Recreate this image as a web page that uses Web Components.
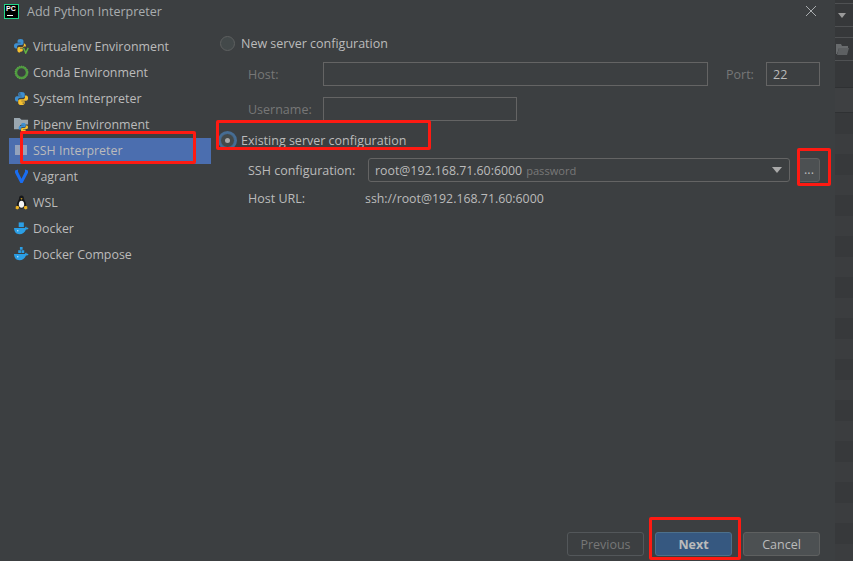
<!DOCTYPE html>
<html>
<head>
<meta charset="utf-8">
<title>Add Python Interpreter</title>
<style>
  html, body { margin: 0; height: 100%; background: #3c3f41; overflow: hidden; }
  body { font: 13px "Open Sans", sans-serif; color: #bbb; }
</style>
</head>
<body>
<template id="icons">
  <svg data-icon="python" viewBox="0 0 16 16"><path fill="#3d8fd1" d="M8 1C5.500 1 4.600 2 4.600 3.300V5h3.600v.6H3C1.700 5.600 1 6.700 1 8.300c0 1.700.8 2.800 2 2.800h1.300V9.400c0-1.200 1-2.200 2.300-2.200h3.100c1 0 1.800-.8 1.800-1.800V3.300C11.500 2 10.400 1 8 1z"/><path fill="#f5c02f" d="M8 15c2.500 0 3.400-1 3.400-2.300V11H7.800v-.6H13c1.300 0 2-1.100 2-2.700 0-1.700-.8-2.800-2-2.800h-1.300v1.700c0 1.200-1 2.200-2.300 2.200H6.300c-1 0-1.800.8-1.800 1.800v2.100C4.500 14 5.600 15 8 15z"/><circle cx="6.200" cy="3.100" r=".7" fill="#3c3f41"/><circle cx="9.800" cy="12.900" r=".7" fill="#3c3f41"/></svg>
  <svg data-icon="venv" viewBox="0 0 16 16"><path fill="#3d8fd1" d="M7 0C4.700 0 3.800 1 3.800 2.200V4h3.400v.6H2.200C1 4.600 0 5.600 0 7.300c0 1.700.8 2.800 2 2.800h1.200V8.500c0-1.200 1-2.200 2.200-2.200h3c1 0 1.700-.8 1.700-1.700V2.200C10.100 1 9.200 0 7 0z"/><path fill="#f5c02f" d="M6.500 13.500c1.300 0 2.300-.3 2.800-1V10h-3V9.400h2.900l1.500-1.500h2.100c-.2-2-1-3-2-3H10.500v1.500c0 1.200-1 2.200-2.200 2.200H5.300c-1 0-1.700.8-1.700 1.700v1.900c0 1.300 1 2.300 2.900 2.300z"/><path fill="none" stroke="#62b543" stroke-width="1.500" d="M10.200 9.500l2.300 5.500 2.700-5.500"/></svg>
  <svg data-icon="conda" viewBox="0 0 16 16"><circle cx="8" cy="8" r="5.800" fill="none" stroke="#4f9c3f" stroke-width="2.500"/><circle cx="8" cy="8" r="6.900" fill="none" stroke="#6fbf55" stroke-width=".7" stroke-dasharray="1.200 1.200"/></svg>
  <svg data-icon="pipenv" viewBox="0 0 16 16"><path fill="#9aa7b0" d="M0 1h6l2 2h7v5H9c-2 0-3 1-3 3v2H0z"/><path fill="#3d8fd1" d="M10 6.500c-1.700 0-2.400.7-2.400 1.600v1.200h2.600v.4H6.600C5.700 9.700 5 10.400 5 11.600s.6 1.900 1.500 1.900h.9v-1.200c0-.8.7-1.500 1.600-1.500h2.200c.7 0 1.300-.6 1.300-1.300V8.100c0-.9-.8-1.600-2.500-1.600z"/><path fill="#f5c02f" d="M10 16c1.700 0 2.400-.7 2.400-1.600v-1.200H9.800v-.4h3.600c.9 0 1.600-.7 1.600-1.900s-.6-1.900-1.500-1.900h-.9v1.200c0 .8-.7 1.500-1.600 1.500H8.800c-.7 0-1.300.6-1.300 1.300v1.400c0 .9.800 1.600 2.500 1.600z"/></svg>
  <svg data-icon="ssh" viewBox="0 0 15 15"><path fill="#93a3bc" d="M1 2h5v10H1zM7 2h6v10H7z"/></svg>
  <svg data-icon="vagrant" viewBox="0 0 15 15"><path fill="#1a6df0" d="M1 1.500l3-.9v2.200l3.500 6.900 3.500-6.900V.6l3 .9v2.300L8.600 14H6.400L1 3.800z"/></svg>
  <svg data-icon="wsl" viewBox="0 0 16 16"><path fill="#17181a" d="M8 .5C6.300.5 5.400 1.800 5.400 3.500c0 2-2.400 4.200-2.400 7.200 0 2 1.800 3.800 5 3.800s5-1.800 5-3.800c0-3-2.400-5.200-2.400-7.200C10.600 1.800 9.700.5 8 .5z"/><ellipse cx="8" cy="9.800" rx="2.800" ry="3.800" fill="#f4f4f4"/><path fill="#eeb422" d="M6.900 3.500h2.200L8 5zM2 12l2.700-.6.9 2.800-2.200 1.300-1.700-1.100zM14 12l-2.700-.6-.9 2.800 2.200 1.300 1.700-1.100z"/></svg>
  <svg data-icon="docker" viewBox="0 0 16 16"><path fill="#2b9fe6" d="M5 1.500h5.500v5H5z"/><path fill="#2b9fe6" d="M0 7.500h11.500c.5-1 .9-1.400 1.400-1.700.4.500.6 1 .5 1.500.8-.1 1.600 0 2.100.4-.5 1-1.500 1.400-2.700 1.300C11.600 12.200 9 14 5.800 14 2 14 .2 11.500 0 7.500z"/><circle cx="4" cy="10.500" r=".8" fill="#bfe3f8"/></svg>
  <svg data-icon="compose" viewBox="0 0 16 16"><path fill="#2b9fe6" d="M6.300 0h2.900v2.800H6.300zM4.500 3.500h2.900v3H4.500zM8 3.500h2.900v3H8z"/><path fill="#2b9fe6" d="M0 7.500h11.500c.5-1 .9-1.400 1.400-1.700.4.500.6 1 .5 1.500.8-.1 1.600 0 2.100.4-.5 1-1.500 1.400-2.700 1.300C11.600 12.200 9 14 5.800 14 2 14 .2 11.500 0 7.500z"/><circle cx="4" cy="10.500" r=".8" fill="#bfe3f8"/></svg>
</template>

<ide-dialog>
  <env-item slot="side" icon="venv">Virtualenv Environment</env-item>
  <env-item slot="side" icon="conda">Conda Environment</env-item>
  <env-item slot="side" icon="python">System Interpreter</env-item>
  <env-item slot="side" icon="pipenv">Pipenv Environment</env-item>
  <env-item slot="side" icon="ssh" selected>SSH Interpreter</env-item>
  <env-item slot="side" icon="vagrant">Vagrant</env-item>
  <env-item slot="side" icon="wsl">WSL</env-item>
  <env-item slot="side" icon="docker">Docker</env-item>
  <env-item slot="side" icon="compose">Docker Compose</env-item>
  <ssh-form slot="main"></ssh-form>
</ide-dialog>
<red-mark style="left:20px;top:131px;width:176px;height:33px"></red-mark>
<red-mark style="left:216px;top:120px;width:215px;height:30px"></red-mark>
<red-mark style="left:797px;top:148px;width:34px;height:38px"></red-mark>
<red-mark style="left:649px;top:517px;width:92px;height:43px"></red-mark>

<script>
class IdeDialog extends HTMLElement {
  connectedCallback() {
    this.attachShadow({ mode: 'open' });
    this.shadowRoot.innerHTML = `
      <style>
        :host { display: flex; width: 853px; height: 561px; }
        .window { width: 835px; display: flex; flex-direction: column; background: #3c3f41; }
        .title { height: 22px; padding: 0 16px 0 4px; display: flex; align-items: center; gap: 8px; flex: none; font-size: 12.500px; color: #a9adaf; }
        .logo { width: 15px; height: 15px; background: #000; border: 1px solid #21d789; box-sizing: border-box; color: #fff; font: bold 7px/8px "Liberation Sans", sans-serif; padding-left: 1px; position: relative; }
        .logo::after { content: ""; position: absolute; left: 2px; bottom: 2px; width: 6px; height: 1px; background: #fff; }
        .title span { flex: 1; }
        .title svg { width: 12px; height: 12px; margin-right: 2px; }
        .body { flex: 1; display: flex; min-height: 0; padding-top: 11px; }
        .side { width: 202px; margin-left: 9px; padding-top: 1px; flex: none; display: flex; flex-direction: column; }
        .main { flex: 1; min-width: 0; }
      </style>
      <div class="window">
        <div class="title">
          <div class="logo">PC</div>
          <span>Add Python Interpreter</span>
          <svg viewBox="0 0 12 12"><path d="M1 1l10 10M11 1L1 11" stroke="#a9adaf" stroke-width="1" fill="none"/></svg>
        </div>
        <div class="body">
          <div class="side"><slot name="side"></slot></div>
          <div class="main"><slot name="main"></slot></div>
        </div>
      </div>
      <backdrop-strip></backdrop-strip>
    `;
  }
}

class EnvItem extends HTMLElement {
  connectedCallback() {
    this.attachShadow({ mode: 'open' });
    const svg = document.getElementById('icons').content.querySelector(`[data-icon="${this.getAttribute('icon')}"]`);
    this.shadowRoot.innerHTML = `
      <style>
        :host { display: flex; align-items: center; box-sizing: border-box; height: 26px; padding: 0 0 2px 5px; gap: 4px; font-size: 12.400px; color: #bbb; }
        :host([selected]) { background: #4b6eaf; color: #bbb; }
        svg { width: 15px; height: 15px; flex: none; }
      </style>
      <slot></slot>
    `;
    this.shadowRoot.insertBefore(svg.cloneNode(true), this.shadowRoot.querySelector('slot'));
  }
}

class RadioLine extends HTMLElement {
  connectedCallback() {
    this.attachShadow({ mode: 'open' });
    this.shadowRoot.innerHTML = `
      <style>
        :host { display: flex; align-items: center; gap: 6px; height: 20px; font-size: 12.500px; color: #bbb; }
        i { width: 13px; height: 13px; border-radius: 50%; border: 1px solid #5e6060; background: #43494a; display: grid; place-items: center; flex: none; }
        :host([checked]) i { border-color: #466d94; box-shadow: 0 0 0 2px #466d94; background: #43494a; }
        :host([checked]) i::after { content: ""; width: 5px; height: 5px; border-radius: 50%; background: #a7a7a7; }
      </style>
      <i></i><slot></slot>
    `;
  }
}

class TextBox extends HTMLElement {
  connectedCallback() {
    this.attachShadow({ mode: 'open' });
    this.shadowRoot.innerHTML = `
      <style>
        :host { display: flex; align-items: center; box-sizing: border-box; height: 24px; padding: 0 6px; border: 1px solid #646464; background: #3c3f41; font-size: 12.500px; color: #bbb; }
      </style>
      <slot></slot>
    `;
  }
}

class DlgButton extends HTMLElement {
  connectedCallback() {
    this.attachShadow({ mode: 'open' });
    this.shadowRoot.innerHTML = `
      <style>
        :host { display: grid; place-items: center; box-sizing: border-box; width: 77px; height: 24px; border: 1px solid #5e6060; border-radius: 3px; background: #4c5052; font-size: 12.500px; color: #bbb; }
        :host([disabled]) { background: transparent; border-color: #53575a; color: #777; }
        :host([primary]) { background: #365880; border-color: #4c708c; font-weight: 700; color: #bbb; }
      </style>
      <slot></slot>
    `;
  }
}

class SshForm extends HTMLElement {
  connectedCallback() {
    this.attachShadow({ mode: 'open' });
    this.shadowRoot.innerHTML = `
      <style>
        :host { display: flex; flex-direction: column; height: 100%; box-sizing: border-box; padding: 0 15px 5px 9px; font-size: 12.500px; color: #bbb; }
        .indent { padding-left: 28px; }
        .off { color: #777; }
        .row { display: flex; align-items: center; }
        .row1 { margin-top: 9px; }
        .row2 { margin-top: 11px; }
        .lab { width: 75px; flex: none; }
        .host { width: 385px; }
        .port { width: 54px; }
        .portlab { margin-left: 18px; width: 40px; }
        .user { width: 194px; }
        .radio2 { margin-top: 9px; }
        .ssh { margin-top: 8px; }
        .ssh .lab { width: 120px; }
        .combo { width: 422px; justify-content: space-between; border-radius: 3px; padding: 0 6px; font-size: 12.350px; }
        .combo em { font-style: normal; font-size: 11.100px; color: #787878; margin-left: 4px; }
        .tri { width: 0; height: 0; border: 5px solid transparent; border-top: 6px solid #a9a9a9; border-bottom: 0; margin-right: 1px; }
        .more { width: 22px; height: 24px; box-sizing: border-box; margin-left: 8px; border: 1px solid #5e6060; border-radius: 3px; background: #4c5052; display: grid; place-items: center; line-height: 1; }
        .url { margin-top: 6px; height: 20px; }
        .url .lab { width: 117px; }
        .url .val { font-size: 12.350px; }
        .foot { margin-top: auto; display: flex; gap: 11px; justify-content: flex-end; }
      </style>
      <radio-line>New server configuration</radio-line>
      <div class="indent off row row1">
        <span class="lab">Host:</span><text-box class="host"></text-box>
        <span class="portlab">Port:</span><text-box class="port" style="color:#bbb">22</text-box>
      </div>
      <div class="indent off row row2">
        <span class="lab">Username:</span><text-box class="user"></text-box>
      </div>
      <radio-line class="radio2" checked>Existing server configuration</radio-line>
      <div class="indent row ssh">
        <span class="lab">SSH configuration:</span>
        <text-box class="combo"><span>root@192.168.71.60:6000<em>password</em></span><span class="tri" style="display:inline-block"></span></text-box>
        <div class="more">...</div>
      </div>
      <div class="indent row url"><span class="lab">Host URL:</span><span class="val">ssh://root@192.168.71.60:6000</span></div>
      <div class="foot">
        <dlg-button disabled>Previous</dlg-button>
        <dlg-button primary>Next</dlg-button>
        <dlg-button>Cancel</dlg-button>
      </div>
    `;
  }
}

class BackdropStrip extends HTMLElement {
  connectedCallback() {
    this.attachShadow({ mode: 'open' });
    const bands = [];
    for (let i = 0; i < 23; i++) {
      bands.push(`<div class="band" style="background:${i % 2 ? '#3b3d3f' : '#37393b'}"></div>`);
    }
    this.shadowRoot.innerHTML = `
      <style>
        :host { display: flex; flex-direction: column; flex: 1; background: #36383a; overflow: hidden; }
        .top { height: 24px; box-sizing: border-box; flex: none; border-top: 1px solid #4f5153; margin-top: 3px; border-bottom: 1px solid #4f5153; display: flex; align-items: center; padding-left: 3px; }
        .tri { width: 0; height: 0; border: 4px solid transparent; border-top: 5px solid #9a9a9a; border-bottom: 0; }
        .gap { height: 10px; flex: none; }
        .folder { height: 24px; box-sizing: border-box; flex: none; border-top: 1px solid #4f5153; border-bottom: 1px solid #4f5153; display: flex; align-items: center; }
        .folder svg { width: 13px; height: 11px; margin-left: 1px; display: block; }
        .blank { height: 27px; box-sizing: border-box; flex: none; border-bottom: 1px solid #2f3133; }
        .head { height: 25px; box-sizing: border-box; flex: none; background: #3e4042; border-bottom: 1px solid #2f3133; }
        .band { height: 20.500px; flex: none; }
      </style>
      <div class="top"><span class="tri"></span></div>
      <div class="gap"></div>
      <div class="folder"><svg viewBox="0 0 13 11"><path fill="#686b6d" d="M0 0h5l1 2h6v2H3L1 10H0z"/><path fill="#5d6062" d="M3 4h10l-2 7H1z"/></svg></div>
      <div class="blank"></div>
      <div class="head"></div>
      ${bands.join('')}
    `;
  }
}

class RedMark extends HTMLElement {
  connectedCallback() {
    this.attachShadow({ mode: 'open' });
    this.shadowRoot.innerHTML = `
      <style>
        :host { display: block; position: absolute; box-sizing: border-box; border: 3px solid #fe1a12; border-radius: 2px; pointer-events: none; }
      </style>
    `;
  }
}

customElements.define('backdrop-strip', BackdropStrip);
customElements.define('ide-dialog', IdeDialog);
customElements.define('env-item', EnvItem);
customElements.define('radio-line', RadioLine);
customElements.define('text-box', TextBox);
customElements.define('dlg-button', DlgButton);
customElements.define('ssh-form', SshForm);
customElements.define('red-mark', RedMark);
</script>
</body>
</html>
